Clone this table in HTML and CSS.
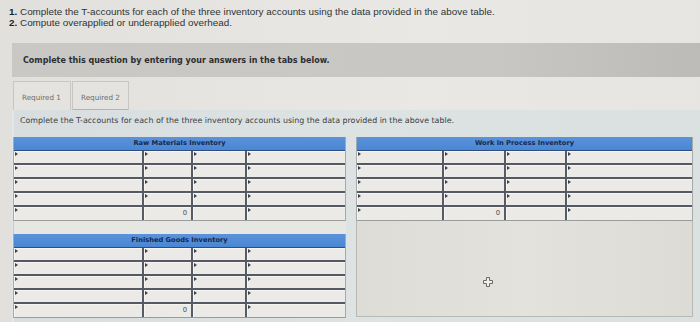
FILE: index.html
```html
<!DOCTYPE html>
<html>
<head>
<meta charset="utf-8">
<link rel="stylesheet" href="styles.css">
</head>
<body>
<div class="instr">
  <p><b>1.</b> Complete the T-accounts for each of the three inventory accounts using the data provided in the above table.</p>
  <p><b>2.</b> Compute overapplied or underapplied overhead.</p>
</div>
<div class="banner">Complete this question by entering your answers in the tabs below.</div>
<div class="tabs">
  <div class="tab active">Required 1</div>
  <div class="tab">Required 2</div>
</div>
<div class="panel">
  <p class="prompt">Complete the T-accounts for each of the three inventory accounts using the data provided in the above table.</p>
  <div class="accounts">
    <div class="col left">
      <div class="taccount">
        <div class="head">Raw Materials Inventory</div>
        <div class="row"><div class="c in"></div><div class="c in"></div><div class="c in"></div><div class="c in"></div></div>
        <div class="row"><div class="c in"></div><div class="c in"></div><div class="c in"></div><div class="c in"></div></div>
        <div class="row"><div class="c in"></div><div class="c in"></div><div class="c in"></div><div class="c in"></div></div>
        <div class="row"><div class="c in"></div><div class="c in"></div><div class="c in"></div><div class="c in"></div></div>
        <div class="row last"><div class="c in"></div><div class="c num">0</div><div class="c"></div><div class="c in"></div></div>
      </div>
      <div class="spacer"></div>
      <div class="taccount">
        <div class="head">Finished Goods Inventory</div>
        <div class="row"><div class="c in"></div><div class="c in"></div><div class="c in"></div><div class="c in"></div></div>
        <div class="row"><div class="c in"></div><div class="c in"></div><div class="c in"></div><div class="c in"></div></div>
        <div class="row"><div class="c in"></div><div class="c in"></div><div class="c in"></div><div class="c in"></div></div>
        <div class="row"><div class="c in"></div><div class="c in"></div><div class="c in"></div><div class="c in"></div></div>
        <div class="row last"><div class="c in"></div><div class="c num">0</div><div class="c"></div><div class="c in"></div></div>
      </div>
    </div>
    <div class="col right">
      <div class="taccount wip">
        <div class="head">Work in Process Inventory</div>
        <div class="row"><div class="c in"></div><div class="c in"></div><div class="c in"></div><div class="c in"></div></div>
        <div class="row"><div class="c in"></div><div class="c in"></div><div class="c in"></div><div class="c in"></div></div>
        <div class="row"><div class="c in"></div><div class="c in"></div><div class="c in"></div><div class="c in"></div></div>
        <div class="row"><div class="c in"></div><div class="c in"></div><div class="c in"></div><div class="c in"></div></div>
        <div class="row last"><div class="c in"></div><div class="c num">0</div><div class="c"></div><div class="c in"></div></div>
      </div>
      <div class="emptybox">
        <svg class="cursor" width="10" height="10" viewBox="0 0 10 10"><path d="M3.5 0.5h3v3h3v3h-3v3h-3v-3h-3v-3h3z" fill="#f2f1ee" stroke="#6b6b6b" stroke-width="1"/></svg>
      </div>
    </div>
  </div>
</div>
</body>
</html>
```
FILE: styles.css
```css
html, body {
  margin: 0;
  padding: 0;
}
body {
  width: 700px;
  height: 322px;
  overflow: hidden;
  background: linear-gradient(90deg, #e1e0dc 0%, #e9e8e4 60%, #e6e5e1 100%);
  font-family: "Liberation Sans", Arial, sans-serif;
}
.instr {
  padding: 6px 0 0 9px;
  height: 37px;
  box-sizing: border-box;
}
.instr p {
  margin: 0;
  font-size: 9.9px;
  line-height: 11px;
  color: #2f3336;
}
.instr b {
  color: #1d2124;
}
.banner {
  margin: 6px 0 0 12px;
  height: 34px;
  box-sizing: border-box;
  background: linear-gradient(90deg, #c9c8c4 0%, #c8c7c3 70%, #bcbbb7 100%);
  padding: 0 0 0 11px;
  display: flex;
  align-items: center;
  font-family: "DejaVu Sans", Verdana, sans-serif;
  font-weight: bold;
  font-size: 8px;
  color: #2c2e30;
}
.tabs {
  display: flex;
  gap: 1px;
  margin: 4px 0 0 13px;
  height: 29px;
}
.tab {
  width: 58px;
  box-sizing: border-box;
  border: 1px solid #c7c6c2;
  border-bottom: none;
  background: #e4e3df;
  font-family: "DejaVu Sans", Verdana, sans-serif;
  font-size: 7.2px;
  color: #6a6c6e;
  padding: 2px 0 0 8px;
  display: flex;
  align-items: center;
}
.tab + .tab {
  width: 57px;
  box-shadow: inset 0 -1px 0 #b3b3af;
}
.panel {
  margin-left: 12px;
  height: 212px;
  background: linear-gradient(90deg, #d8dedf 0%, #dde2e3 50%, #dbe0e1 100%);
  border-left: 2px solid #e3e6e6;
  box-sizing: border-box;
}
.prompt {
  margin: 0;
  padding: 6px 0 0 6px;
  height: 27px;
  box-sizing: border-box;
  font-family: "DejaVu Sans", Verdana, sans-serif;
  font-size: 7.9px;
  line-height: 9px;
  color: #3a3d40;
}
.accounts {
  display: flex;
  gap: 10px;
  margin-left: -1px;
}
.col {
  display: flex;
  flex-direction: column;
}
.left { width: 333px; }
.right { width: 337px; }
.taccount {
  background: #e9e8e4;
  border-left: 1px solid #a7a8aa;
  border-right: 1px solid #a7a8aa;
}
.head {
  height: 13px;
  background: linear-gradient(180deg, #5a93db 0%, #4a86d3 100%);
  border-bottom: 1px solid #2f4d80;
  font-family: "DejaVu Sans", Verdana, sans-serif;
  font-weight: bold;
  font-size: 6.7px;
  line-height: 13px;
  text-align: center;
  color: #172850;
}
.row {
  display: grid;
  grid-template-columns: 130px 49px 54px 1fr;
  height: 12px;
  border-bottom: 2px solid #555963;
}
.wip .row {
  grid-template-columns: 87px 62px 61px 1fr;
}
.row.last {
  border-bottom: 1px solid #9a9b9c;
  height: 13px;
}
.c {
  position: relative;
  background: #ebeae6;
  border-right: 2px solid #575b64;
  box-shadow: inset 1px 1px 0 #f6f5f2;
}
.c:last-child {
  border-right: none;
}
.c.in::before {
  content: "";
  position: absolute;
  left: 1px;
  top: 1px;
  border-top: 2px solid transparent;
  border-bottom: 2px solid transparent;
  border-left: 3px solid #3b3f48;
}
.c.num {
  font-family: "DejaVu Sans", Verdana, sans-serif;
  font-size: 6.8px;
  line-height: 13px;
  text-align: right;
  padding-right: 4px;
  color: #4a4d52;
}
.spacer {
  height: 13px;
  background: #e6e6e2;
  border-left: 1px solid #c8c9c8;
}
.emptybox {
  position: relative;
  height: 96px;
  background: linear-gradient(90deg, #dddcd6 0%, #e3e2dd 50%, #dcdbd6 100%);
  border: 1px solid #b9b9b4;
  border-top: none;
  box-sizing: border-box;
}
.cursor {
  position: absolute;
  left: 126px;
  top: 56px;
}
```
